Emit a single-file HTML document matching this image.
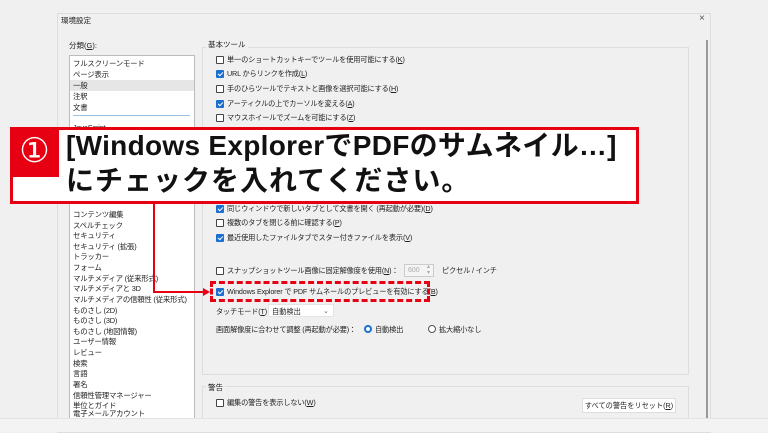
<!DOCTYPE html>
<html><head><meta charset="utf-8"><style>
*{margin:0;padding:0;box-sizing:border-box}
body{width:768px;height:432px;background:#f0f0f0;position:relative;overflow:hidden;font-family:"Liberation Sans","Noto Sans CJK JP",sans-serif;font-size:8px;color:#222}
.a{position:absolute;white-space:nowrap}
.dlg{left:57px;top:13px;width:654px;height:420px;border:1px solid #ddd;background:#f0f0f0}
.list{left:69px;top:55px;width:126px;height:364px;background:#fff;border:1px solid #bbb;overflow:hidden}
.li{position:absolute;left:3px;font-size:7.4px;line-height:10px;letter-spacing:-0.2px}
.grp{border:1px solid #ddd}
.cb{position:absolute;width:8px;height:8px;border:1px solid #444;background:#fff;border-radius:1px}
.cb.on{background:#1a6fd0;border-color:#1a6fd0}
.cb.on:after{content:"";position:absolute;left:2px;top:0px;width:2px;height:4px;border:solid #fff;border-width:0 1px 1px 0;transform:rotate(45deg)}
.t{position:absolute;font-size:7.2px;line-height:9px;letter-spacing:-0.15px;white-space:nowrap}
</style></head><body>
<div class="a dlg"></div>
<div class="a" style="left:61px;top:15px;font-size:7.5px">環境設定</div>
<div class="a" style="left:699px;top:13px;font-size:10px;color:#555">×</div>
<div class="a" style="left:706px;top:40px;width:2px;height:380px;background:#999"></div>
<div class="a" style="left:69px;top:40px;font-size:7.5px">分類(<u>G</u>):</div>
<div class="a list">
<div class="li" style="top:3px">フルスクリーンモード</div>
<div class="li" style="top:14px">ページ表示</div>
<div style="position:absolute;left:0;top:24px;width:124px;height:11px;background:#e6e6e6"></div>
<div class="li" style="top:25px">一般</div>
<div class="li" style="top:36px">注釈</div>
<div class="li" style="top:47px">文書</div>
<div style="position:absolute;left:3px;top:59px;width:117px;height:1px;background:#9cc3e6"></div>
<div class="li" style="top:67px">JavaScript</div>
<div class="li" style="top:154px">コンテンツ編集</div>
<div class="li" style="top:165px">スペルチェック</div>
<div class="li" style="top:175px">セキュリティ</div>
<div class="li" style="top:186px">セキュリティ (拡張)</div>
<div class="li" style="top:196px">トラッカー</div>
<div class="li" style="top:207px">フォーム</div>
<div class="li" style="top:218px">マルチメディア (従来形式)</div>
<div class="li" style="top:228px">マルチメディアと 3D</div>
<div class="li" style="top:239px">マルチメディアの信頼性 (従来形式)</div>
<div class="li" style="top:250px">ものさし (2D)</div>
<div class="li" style="top:260px">ものさし (3D)</div>
<div class="li" style="top:271px">ものさし (地図情報)</div>
<div class="li" style="top:281px">ユーザー情報</div>
<div class="li" style="top:292px">レビュー</div>
<div class="li" style="top:303px">検索</div>
<div class="li" style="top:313px">言語</div>
<div class="li" style="top:324px">署名</div>
<div class="li" style="top:335px">信頼性管理マネージャー</div>
<div class="li" style="top:345px">単位とガイド</div>
<div class="li" style="top:353px">電子メールアカウント</div>
</div>
<div class="a grp" style="left:202px;top:47px;width:487px;height:328px"></div>
<div class="a" style="left:206px;top:39px;background:#f0f0f0;padding:0 2px;font-size:7.5px">基本ツール</div>
<div class="cb" style="left:216px;top:56px"></div><div class="t" style="left:227px;top:55px">単一のショートカットキーでツールを使用可能にする(<u>K</u>)</div>
<div class="cb on" style="left:216px;top:70px"></div><div class="t" style="left:227px;top:69px">URL からリンクを作成(<u>L</u>)</div>
<div class="cb" style="left:216px;top:85px"></div><div class="t" style="left:227px;top:84px">手のひらツールでテキストと画像を選択可能にする(<u>H</u>)</div>
<div class="cb on" style="left:216px;top:100px"></div><div class="t" style="left:227px;top:99px">アーティクルの上でカーソルを変える(<u>A</u>)</div>
<div class="cb" style="left:216px;top:114px"></div><div class="t" style="left:227px;top:113px">マウスホイールでズームを可能にする(<u>Z</u>)</div>
<div class="cb on" style="left:216px;top:205px"></div><div class="t" style="left:227px;top:204px">同じウィンドウで新しいタブとして文書を開く (再起動が必要)(<u>D</u>)</div>
<div class="cb" style="left:216px;top:219px"></div><div class="t" style="left:227px;top:218px">複数のタブを閉じる前に確認する(<u>P</u>)</div>
<div class="cb on" style="left:216px;top:234px"></div><div class="t" style="left:227px;top:233px">最近使用したファイルタブでスター付きファイルを表示(<u>V</u>)</div>
<div class="cb" style="left:216px;top:267px"></div><div class="t" style="left:227px;top:266px">スナップショットツール画像に固定解像度を使用(<u>N</u>)：</div>
<div class="a" style="left:404px;top:264px;width:30px;height:13px;border:1px solid #ccc;background:#f4f4f4;color:#aaa;font-size:7px;padding:2px 3px">600</div>
<div class="a" style="left:427px;top:264px;font-size:6px;color:#aaa;line-height:6px">▴<br>▾</div>
<div class="t" style="left:442px;top:266px">ピクセル / インチ</div>
<div class="cb on" style="left:216px;top:288px"></div><div class="t" style="left:227px;top:287px">Windows Explorer で PDF サムネールのプレビューを有効にする(<u>B</u>)</div>
<div class="t" style="left:216px;top:307px">タッチモード(<u>T</u>)：</div>
<div class="a" style="left:268px;top:304px;width:66px;height:13px;background:#fff;border:1px solid #e4e4e4;font-size:7.2px;padding:2px 3px">自動検出<span style="position:absolute;right:4px;top:1px;color:#666">⌄</span></div>
<div class="t" style="left:216px;top:325px">画面解像度に合わせて調整 (再起動が必要)：</div>
<div class="a" style="left:364px;top:325px;width:8px;height:8px;border-radius:50%;border:2.5px solid #1a6fd0;background:#fff"></div>
<div class="t" style="left:375px;top:325px">自動検出</div>
<div class="a" style="left:428px;top:325px;width:8px;height:8px;border-radius:50%;border:1px solid #555;background:#fff"></div>
<div class="t" style="left:439px;top:325px">拡大縮小なし</div>
<div class="a grp" style="left:202px;top:386px;width:487px;height:40px"></div>
<div class="a" style="left:206px;top:382px;background:#f0f0f0;padding:0 2px;font-size:7.5px">警告</div>
<div class="cb" style="left:216px;top:399px"></div><div class="t" style="left:227px;top:398px">編集の警告を表示しない(<u>W</u>)</div>
<div class="a" style="left:582px;top:398px;width:94px;height:15px;background:#fff;border:1px solid #ddd;font-size:7.2px;text-align:center;line-height:13px">すべての警告をリセット(<u>R</u>)</div>
<div class="a" style="left:0;top:418px;width:768px;height:14px;background:#f3f3f3;border-top:1px solid #e4e4e4"></div>
<!-- banner -->
<div class="a" style="left:10px;top:127px;width:629px;height:77px;background:#fff;border:3px solid #e60012"></div>
<div class="a" style="left:10px;top:127px;width:49px;height:50px;background:#e60012;color:#fff;font-size:34px;line-height:48px;text-align:center;font-family:'DejaVu Sans','Noto Sans CJK JP',sans-serif">①</div>
<div class="a" style="left:66px;top:129px;font-size:28px;font-weight:bold;color:#111;line-height:34px;letter-spacing:0.3px">[Windows ExplorerでPDFのサムネイル…]</div>
<div class="a" style="left:66px;top:164px;font-size:28px;font-weight:bold;color:#111;line-height:34px;letter-spacing:1px">にチェックを入れてください。</div>
<div class="a" style="left:153px;top:204px;width:2px;height:89px;background:#e60012"></div>
<div class="a" style="left:153px;top:291px;width:52px;height:2px;background:#e60012"></div>
<div class="a" style="left:203px;top:288px;width:0;height:0;border-left:7px solid #e60012;border-top:4px solid transparent;border-bottom:4px solid transparent"></div>
<div class="a" style="left:210px;top:281px;width:220px;height:21px;border:3px dashed #e60012"></div>
</body></html>
